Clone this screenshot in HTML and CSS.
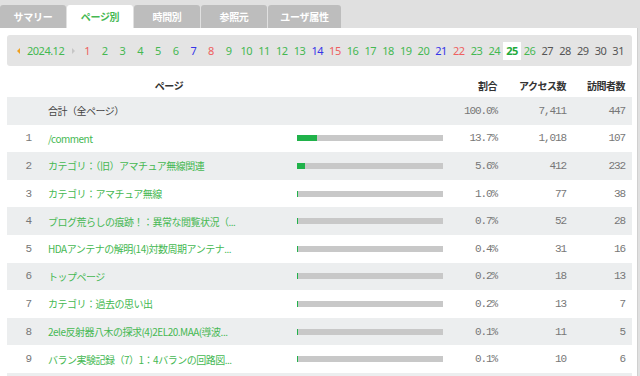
FILE: index.html
```html
<!DOCTYPE html>
<html lang="ja">
<head>
    <meta charset="UTF-8">
    <meta name="viewport" content="width=device-width, initial-scale=1.0">
    <title>アクセス解析</title>
    <link rel="stylesheet" href="styles.css">
</head>
<body>
    <div class="tabs">
        <span class="tab">サマリー</span>
        <span class="tab active">ページ別</span>
        <span class="tab">時間別</span>
        <span class="tab">参照元</span>
        <span class="tab wide">ユーザ属性</span>
    </div>
    <div class="panel">
        <div class="datebar">
            <span class="arrow prev"></span>
            <span class="month">2024.12</span>
            <span class="arrow next"></span>
            <div class="days">
                <span class="day sun">1</span>
                <span class="day">2</span>
                <span class="day">3</span>
                <span class="day">4</span>
                <span class="day">5</span>
                <span class="day">6</span>
                <span class="day sat">7</span>
                <span class="day sun">8</span>
                <span class="day">9</span>
                <span class="day">10</span>
                <span class="day">11</span>
                <span class="day">12</span>
                <span class="day">13</span>
                <span class="day sat">14</span>
                <span class="day sun">15</span>
                <span class="day">16</span>
                <span class="day">17</span>
                <span class="day">18</span>
                <span class="day">19</span>
                <span class="day">20</span>
                <span class="day sat">21</span>
                <span class="day sun">22</span>
                <span class="day">23</span>
                <span class="day">24</span>
                <span class="day current">25</span>
                <span class="day">26</span>
                <span class="day future">27</span>
                <span class="day future">28</span>
                <span class="day future">29</span>
                <span class="day future">30</span>
                <span class="day future">31</span>
            </div>
        </div>

        <div class="ranking">
            <div class="row head">
                <span></span>
                <span class="name">ページ</span>
                <span></span>
                <span class="num">割合</span>
                <span class="num">アクセス数</span>
                <span class="num">訪問者数</span>
            </div>
            <div class="row">
                <span class="rank"></span>
                <span class="name total">合計（全ページ）</span>
                <span></span>
                <span class="num">100.0%</span>
                <span class="num">7,411</span>
                <span class="num">447</span>
            </div>
            <div class="row">
                <span class="rank">1</span>
                <span class="name link">/comment</span>
                <span class="bar"><i style="width: 13.7%"></i></span>
                <span class="num">13.7%</span>
                <span class="num">1,018</span>
                <span class="num">107</span>
            </div>
            <div class="row">
                <span class="rank">2</span>
                <span class="name link">カテゴリ：（旧）アマチュア無線関連</span>
                <span class="bar"><i style="width: 5.6%"></i></span>
                <span class="num">5.6%</span>
                <span class="num">412</span>
                <span class="num">232</span>
            </div>
            <div class="row">
                <span class="rank">3</span>
                <span class="name link">カテゴリ：アマチュア無線</span>
                <span class="bar"><i style="width: 1.0%"></i></span>
                <span class="num">1.0%</span>
                <span class="num">77</span>
                <span class="num">38</span>
            </div>
            <div class="row">
                <span class="rank">4</span>
                <span class="name link">ブログ荒らしの痕跡！：異常な閲覧状況（...</span>
                <span class="bar"><i style="width: 0.7%"></i></span>
                <span class="num">0.7%</span>
                <span class="num">52</span>
                <span class="num">28</span>
            </div>
            <div class="row">
                <span class="rank">5</span>
                <span class="name link">HDAアンテナの解明(14)対数周期アンテナ...</span>
                <span class="bar"><i style="width: 0.4%"></i></span>
                <span class="num">0.4%</span>
                <span class="num">31</span>
                <span class="num">16</span>
            </div>
            <div class="row">
                <span class="rank">6</span>
                <span class="name link">トップページ</span>
                <span class="bar"><i style="width: 0.2%"></i></span>
                <span class="num">0.2%</span>
                <span class="num">18</span>
                <span class="num">13</span>
            </div>
            <div class="row">
                <span class="rank">7</span>
                <span class="name link">カテゴリ：過去の思い出</span>
                <span class="bar"><i style="width: 0.2%"></i></span>
                <span class="num">0.2%</span>
                <span class="num">13</span>
                <span class="num">7</span>
            </div>
            <div class="row">
                <span class="rank">8</span>
                <span class="name link">2ele反射器八木の探求(4)2EL20.MAA(導波...</span>
                <span class="bar"><i style="width: 0.1%"></i></span>
                <span class="num">0.1%</span>
                <span class="num">11</span>
                <span class="num">5</span>
            </div>
            <div class="row">
                <span class="rank">9</span>
                <span class="name link">バラン実験記録（7）1：4バランの回路図...</span>
                <span class="bar"><i style="width: 0.1%"></i></span>
                <span class="num">0.1%</span>
                <span class="num">10</span>
                <span class="num">6</span>
            </div>
            <div class="row">
                <span class="rank"></span>
                <span class="name"></span>
                <span></span>
                <span class="num"></span>
                <span class="num"></span>
                <span class="num"></span>
            </div>
        </div>
    </div>
</body>
</html>
```

FILE: styles.css
```css
body {
    margin: 0;
    background-color: #e0e0e0;
    font-family: "Noto Sans CJK JP", "Noto Sans", sans-serif;
    overflow: hidden;
}

/* tabs */
.tabs {
    display: flex;
    gap: 1px;
    padding-top: 5px;
}
.tab {
    width: 66px;
    height: 23px;
    line-height: 23px;
    text-align: center;
    background-color: #bdbdbd;
    color: #fff;
    font-size: 10px;
    font-weight: bold;
    letter-spacing: -0.3px;
    border-radius: 3px 3px 0 0;
}
.tab.wide {
    width: 73px;
}
.tab.active {
    background-color: #fff;
    color: #45b852;
}

/* main panel */
.panel {
    box-sizing: border-box;
    background-color: #fff;
    width: 638px;
    height: 348px;
    overflow: hidden;
    padding: 7px 5px 0 7px;
    border-right: 1px solid #d0d0d0;
}

.datebar {
    display: flex;
    align-items: center;
    height: 31px;
    background-color: #e4e4e4;
    border-radius: 3px;
    font-family: "Noto Sans", sans-serif;
    font-size: 11px;
    letter-spacing: -0.5px;
}
.arrow {
    width: 0;
    height: 0;
    border-top: 3.5px solid transparent;
    border-bottom: 3.5px solid transparent;
}
.arrow.prev {
    margin-left: 10px;
    border-right: 3px solid #f0a020;
}
.arrow.next {
    margin-left: 8px;
    border-left: 3px solid #c6c6c6;
}
.month {
    margin-left: 7px;
    color: #45b852;
}
.days {
    display: flex;
    width: 549px;
    margin-left: 3px;
}
.day {
    flex: 1;
    text-align: center;
    color: #45b852;
    height: 18px;
    line-height: 18px;
}
.day.sun {
    color: #ee6060;
}
.day.sat {
    color: #3535e8;
}
.day.future {
    color: #555;
}
.day.current {
    background-color: #fff;
    color: #1faa3c;
    font-weight: bold;
}

/* ranking table */
.ranking {
    margin-top: 8px;
}
.row {
    display: grid;
    grid-template-columns: 34px 256px 146px 54px 69px 66px;
    align-items: center;
    height: 27.6px;
    font-size: 10px;
}
.row:nth-child(even) {
    background-color: #eceeef;
}
.row.head {
    height: 23px;
    color: #333;
    font-weight: bold;
}
.row.head .name {
    text-align: center;
    padding-right: 7px;
}
.rank {
    text-align: right;
    padding-right: 9px;
    color: #777;
    font-family: "Liberation Mono", monospace;
    font-size: 11px;
}
.name {
    padding-left: 7px;
    white-space: nowrap;
    overflow: hidden;
    letter-spacing: -0.5px;
}
.total {
    color: #444;
}
.link {
    color: #45b852;
}
.bar {
    display: block;
    height: 6px;
    background-color: #c8c8c8;
}
.bar i {
    display: block;
    height: 100%;
    background-color: #20b24a;
}
.num {
    text-align: right;
    color: #777;
    font-family: "Liberation Mono", monospace;
    font-size: 11px;
    letter-spacing: -1.1px;
}
.row:not(.head) .num:last-child {
    padding-right: 7px;
}
.row.head .num {
    font-family: "Noto Sans CJK JP", sans-serif;
    font-size: 10px;
    color: #333;
    letter-spacing: -0.5px;
}
.row.head .num:last-child {
    padding-right: 7px;
}
```
